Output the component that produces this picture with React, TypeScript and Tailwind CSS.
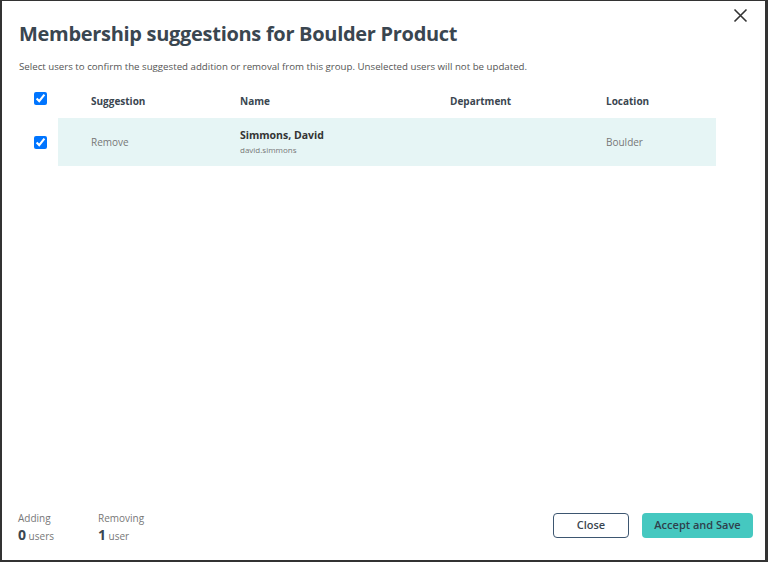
export default function App() {
  return (
    <div
      className="w-[768px] h-[562px] bg-white border-t border-l-2 border-r-[3px] border-b-2 border-[#333] flex flex-col text-[#3a4650]"
      style={{ fontFamily: "'Open Sans', 'Noto Sans', sans-serif" }}
    >
      {/* Header */}
      <div className="relative pl-[17px] pr-4">
        <button className="absolute right-[17px] top-[6px] w-4 h-4 flex items-center justify-center text-[#333]">
          <svg width="15" height="15" viewBox="0 0 15 15" fill="none" stroke="currentColor" strokeWidth="1.6">
            <path d="M1.5 1.5 L13.5 13.5 M13.5 1.5 L1.5 13.5" />
          </svg>
        </button>
        <h1 className="mt-[18px] text-[20px] leading-[30px] font-bold tracking-[-0.3px] text-[#3a4650]">
          Membership suggestions for Boulder Product
        </h1>
        <p className="mt-[11px] text-[9.7px] leading-[14px] text-[#555]">
          Select users to confirm the suggested addition or removal from this group. Unselected users will not be updated.
        </p>
      </div>

      {/* Table */}
      <div className="mt-[9px] pl-[30px]">
        <div className="flex items-start h-[35px]">
          <div className="w-[26px] pt-[9px] pl-[2px] flex items-center">
            <input type="checkbox" defaultChecked className="w-[13px] h-[13px] m-0" />
          </div>
          <div className="w-[658px] px-[33px] grid grid-cols-[149px_210px_156px_1fr] text-[10px] leading-[14px] font-bold pt-[11px]">
            <span>Suggestion</span>
            <span>Name</span>
            <span>Department</span>
            <span>Location</span>
          </div>
        </div>
        <div className="flex items-center h-[48px]">
          <div className="w-[26px] pl-[2px] flex items-center">
            <input type="checkbox" defaultChecked className="w-[13px] h-[13px] m-0" />
          </div>
          <div className="w-[658px] h-full bg-[#e6f5f5] px-[33px] grid grid-cols-[149px_210px_156px_1fr] items-center text-[10px]">
            <span className="text-[#777]">Remove</span>
            <div className="flex flex-col gap-[1px] -mt-[1px]">
              <span className="text-[10.5px] leading-[15px] font-bold text-[#333]">Simmons, David</span>
              <span className="text-[8px] leading-[12px] text-[#777]">david.simmons</span>
            </div>
            <span></span>
            <span className="text-[#777]">Boulder</span>
          </div>
        </div>
      </div>

      {/* Footer */}
      <div className="mt-auto mb-[14px] pl-[16px] pr-[12px] flex items-end justify-between">
        <div className="flex gap-[44px]">
          <div className="flex flex-col">
            <span className="text-[10px] leading-[14px] text-[#777]">Adding</span>
            <span className="text-[10px] text-[#777] leading-[20px]">
              <span className="text-[14px] font-bold text-[#3a4650]">0</span> users
            </span>
          </div>
          <div className="flex flex-col">
            <span className="text-[10px] leading-[14px] text-[#777]">Removing</span>
            <span className="text-[10px] text-[#777] leading-[20px]">
              <span className="text-[14px] font-bold text-[#3a4650]">1</span> user
            </span>
          </div>
        </div>
        <div className="flex gap-[13px] mb-[8px]">
          <button className="w-[76px] h-[25px] rounded-[4px] border border-[#3d5670] text-[11px] font-semibold text-[#3a4650]">
            Close
          </button>
          <button className="w-[111px] h-[25px] rounded-[4px] bg-[#45c8c0] text-[11px] font-semibold text-[#2f3f4c]">
            Accept and Save
          </button>
        </div>
      </div>
    </div>
  );
}
